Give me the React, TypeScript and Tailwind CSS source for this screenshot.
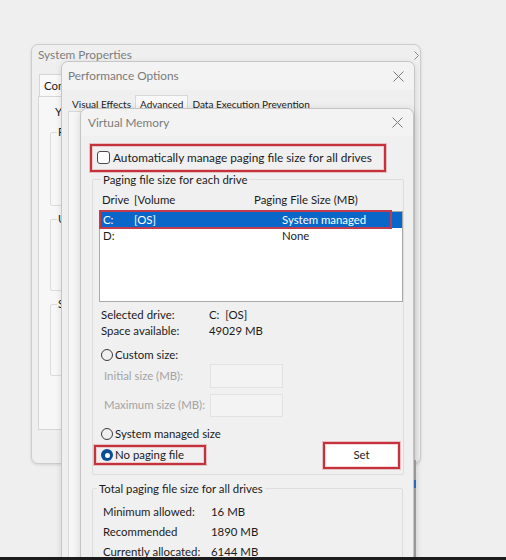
import React from "react";

function RedBox({ className = "", children }: { className?: string; children?: React.ReactNode }) {
  return (
    <div className={"border-2 border-[#c6323c] shadow-[0_0_0_1px_rgba(198,50,60,0.25),inset_0_0_0_1px_rgba(198,50,60,0.2)] " + className}>
      {children}
    </div>
  );
}

function Radio({ checked = false }: { checked?: boolean }) {
  if (checked) {
    return (
      <span className="w-[12px] h-[12px] rounded-full bg-[#0b4d94] flex items-center justify-center shrink-0">
        <span className="w-[5px] h-[5px] rounded-full bg-white" />
      </span>
    );
  }
  return <span className="w-[12px] h-[12px] rounded-full border border-[#3a3a3a] bg-transparent shrink-0" />;
}

function CloseX({ className = "" }: { className?: string }) {
  return (
    <svg width="11" height="11" viewBox="0 0 11 11" className={className}>
      <path d="M0.5 0.5 L10.5 10.5 M10.5 0.5 L0.5 10.5" stroke="#7a7a7a" strokeWidth="1" fill="none" />
    </svg>
  );
}

export default function App() {
  return (
    <div className="relative w-[506px] h-[560px] overflow-hidden whitespace-nowrap bg-[#efefef] font-['Lato','Noto_Sans',sans-serif] text-[11.4px] leading-[16px] text-[#1b1b1b]">
      {/* System Properties */}
      <div className="absolute left-[31px] top-[44px] w-[390px] h-[420px] rounded-[7px] border border-[#cdcdcd] bg-[#efefef] flex flex-col shadow-[0_1px_3px_rgba(0,0,0,0.12)]">
        <div className="h-[20px] flex items-center justify-between pl-[6px] pr-[1px] text-[#7d7d7d] text-[11.8px]">
          <span>System Properties</span>
          <svg width="5" height="9" viewBox="0 0 5 9">
            <path d="M0.5 0.5 L4.5 4.5 L0.5 8.5" stroke="#8a8a8a" strokeWidth="1" fill="none" />
          </svg>
        </div>
        <div className="mt-[9px] h-[22px] flex items-end pl-[7px]">
          <div className="h-[22px] px-[4px] border border-b-0 border-[#d6d6d6] bg-[#f9f9f9] flex items-center">Computer Name</div>
          <div className="h-[19px] px-[4px] flex items-center">Hardware</div>
        </div>
        <div className="mx-[6px] h-[334px] border border-[#d6d6d6] bg-[#f7f7f7] flex flex-col">
          <div className="mt-[7px] ml-[16px]">You must be logged on as an Administrator</div>
          <fieldset className="mt-[4px] ml-[11px] mr-[11px] h-[82px] border border-[#dcdcdc] rounded-[2px] px-[6px]">
            <legend className="px-[1px]">Performance</legend>
          </fieldset>
          <fieldset className="mt-[5px] ml-[11px] mr-[11px] h-[80px] border border-[#dcdcdc] rounded-[2px] px-[6px]">
            <legend className="px-[1px]">User Profiles</legend>
          </fieldset>
          <fieldset className="mt-[5px] ml-[11px] mr-[11px] h-[80px] border border-[#dcdcdc] rounded-[2px] px-[6px]">
            <legend className="px-[1px]">Startup and Recovery</legend>
          </fieldset>
        </div>
      </div>

      {/* Performance Options */}
      <div className="absolute left-[61px] top-[61px] w-[354px] h-[520px] rounded-t-[7px] border border-[#c6c6c6] bg-[#efefef] flex flex-col shadow-[0_2px_6px_rgba(0,0,0,0.12)]">
        <div className="h-[28px] flex items-center justify-between pl-[6px] pr-[10px] bg-[#f3f3f3] rounded-t-[7px] text-[#7a7a7a] text-[11.8px]">
          <span>Performance Options</span>
          <CloseX />
        </div>
        <div className="mt-[5px] h-[16px] flex items-end pl-[6px] text-[10px] leading-[14px]">
          <div className="h-[14px] px-[4px] flex items-center">Visual Effects</div>
          <div className="h-[17px] px-[4px] border border-b-0 border-[#d8d8d8] bg-[#f8f8f8] flex items-center mb-[-1px]">Advanced</div>
          <div className="h-[14px] px-[4px] flex items-center">Data Execution Prevention</div>
        </div>
        <div className="mx-[6px] flex-1 border border-[#d8d8d8] bg-[#f7f7f7]" />
      </div>

      {/* Strip at right edge behind */}
      <div className="absolute left-[413px] top-[460px] w-[3px] h-[97px] bg-[#a2a2a2] flex flex-col">
        <div className="mt-[20px] h-[8px] bg-[#2f6fc4]" />
      </div>

      {/* Virtual Memory */}
      <div className="absolute left-[80px] top-[108px] w-[334px] h-[470px] rounded-t-[7px] border border-[#c4c4c4] bg-[#f0f0f0] flex flex-col shadow-[0_2px_8px_rgba(0,0,0,0.15)]">
        <div className="h-[27px] shrink-0 flex items-center justify-between pl-[7px] pr-[10px] bg-[#f3f3f3] rounded-t-[7px] text-[#7a7a7a] text-[11.8px]">
          <span>Virtual Memory</span>
          <CloseX />
        </div>

        <RedBox className="mt-[8px] ml-[9px] w-[296px] h-[29px] flex items-center pl-[5px] gap-[3px] text-[11.8px]">
          <span className="w-[13px] h-[13px] rounded-[3px] border border-[#4a4a4a] bg-white shrink-0" />
          <span>Automatically manage paging file size for all drives</span>
        </RedBox>

        <fieldset className="ml-[11px] w-[311px] border border-[#dddddd] rounded-[2px] pl-[6px] pb-[5px]">
          <legend className="ml-[2px] px-[2px] leading-[16px]">Paging file size for each drive</legend>
          <div className="mt-[4px] h-[16px] flex items-center">
            <span className="ml-[3px] w-[32px]">Drive</span>
            <span className="w-[120px]">[Volume</span>
            <span>Paging File Size (MB)</span>
          </div>
          <div className="mt-[3px] w-[304px] h-[91px] border border-[#a9a9a9] bg-white flex flex-col">
            <div className="relative h-[16px] bg-[#0a66c8] text-white flex items-center">
              <span className="ml-[3px] w-[31px]">C:</span>
              <span className="w-[148px]">[OS]</span>
              <span>System managed</span>
              <div className="absolute left-[-1px] top-[-2px] w-[293px] h-[19px] border-2 border-[#c23a4c]" />
            </div>
            <div className="h-[16px] flex items-center">
              <span className="ml-[3px] w-[179px]">D:</span>
              <span>None</span>
            </div>
          </div>
          <div className="mt-[5px] h-[16px] flex items-center">
            <span className="ml-[2px] w-[108px]">Selected drive:</span>
            <span>C:&nbsp;&nbsp;[OS]</span>
          </div>
          <div className="h-[16px] flex items-center">
            <span className="ml-[2px] w-[108px]">Space available:</span>
            <span>49029 MB</span>
          </div>
          <div className="mt-[8px] h-[16px] flex items-center gap-[2px] ml-[2px]">
            <Radio />
            <span>Custom size:</span>
          </div>
          <div className="mt-[1px] h-[24px] flex items-center">
            <span className="ml-[5px] w-[106px] text-[#a3a3a3]">Initial size (MB):</span>
            <span className="w-[73px] h-[24px] border border-[#e2e2e2] bg-[#f3f3f3]" />
          </div>
          <div className="mt-[6px] h-[23px] flex items-center">
            <span className="ml-[5px] w-[106px] text-[#a3a3a3]">Maximum size (MB):</span>
            <span className="w-[73px] h-[23px] border border-[#e2e2e2] bg-[#f3f3f3]" />
          </div>
          <div className="mt-[9px] h-[16px] flex items-center gap-[2px] ml-[2px]">
            <Radio />
            <span>System managed size</span>
          </div>
          <div className="h-[27px] flex items-center">
            <RedBox className="ml-[-5px] w-[112px] h-[20px] flex items-center pl-[5px] gap-[2px]">
              <Radio checked />
              <span>No paging file</span>
            </RedBox>
            <RedBox className="ml-[117px] w-[77px] h-[27px] bg-white flex items-center justify-center">
              <span>Set</span>
            </RedBox>
          </div>
        </fieldset>

        <fieldset className="mt-[6px] ml-[11px] w-[311px] h-[100px] border border-[#dddddd] rounded-[2px] pl-[10px]">
          <legend className="ml-[-6px] px-[2px] leading-[16px]">Total paging file size for all drives</legend>
          <div className="mt-[5px] h-[20px] flex items-center">
            <span className="w-[108px]">Minimum allowed:</span>
            <span>16 MB</span>
          </div>
          <div className="h-[20px] flex items-center">
            <span className="w-[108px]">Recommended</span>
            <span>1890 MB</span>
          </div>
          <div className="h-[20px] flex items-center">
            <span className="w-[108px]">Currently allocated:</span>
            <span>6144 MB</span>
          </div>
        </fieldset>
      </div>

      {/* bottom edge */}
      <div className="absolute left-0 bottom-0 w-full h-[3px] bg-[#1c1c1c]" />
    </div>
  );
}
